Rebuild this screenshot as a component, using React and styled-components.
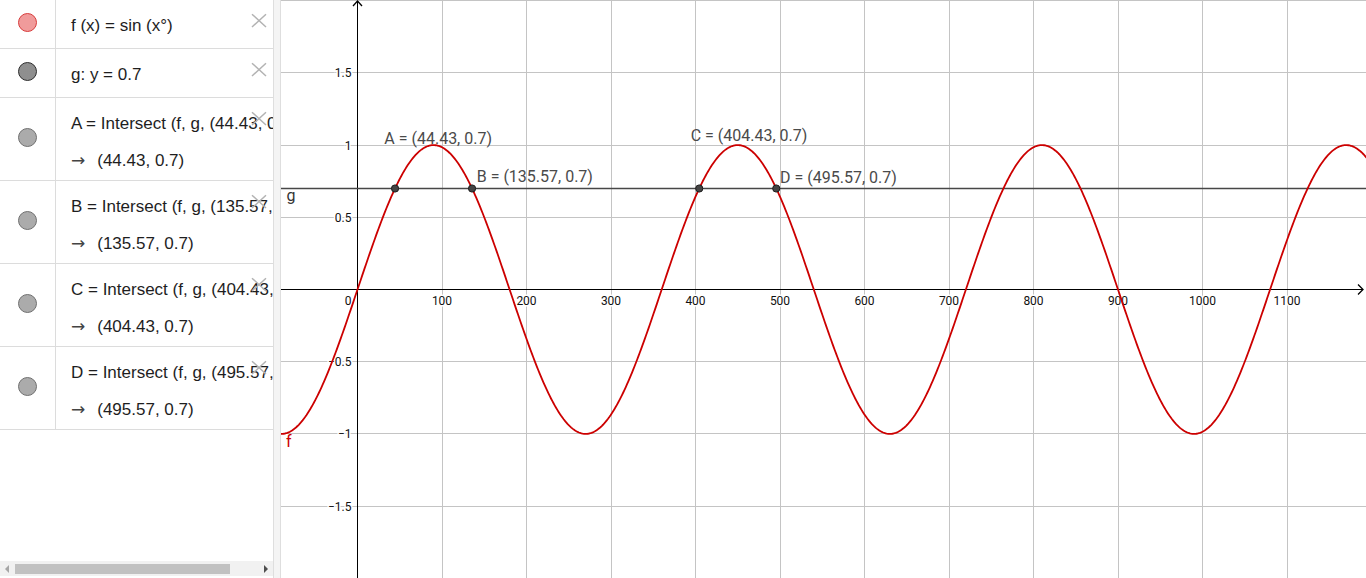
import React from "react"
import styled, { createGlobalStyle } from "styled-components"

// graph geometry (svg coords, the graph view starts at page x = 281)
const W = 1085
const H = 578
const OX = 76.5
const OY = 289.5
const SX = 0.845
const SY = 144.4

const px = x => OX + x * SX
const py = y => OY - y * SY
const snap = v => Math.round(v - 0.5) + 0.5

const rows = [
  { id: "f", dot: "red", text: "f (x) = sin (x°)" },
  { id: "g", dot: "dark", text: "g: y = 0.7" },
  { id: "A", dot: "plain", text: "A = Intersect (f, g, (44.43, 0.7))", value: "(44.43, 0.7)" },
  { id: "B", dot: "plain", text: "B = Intersect (f, g, (135.57, 0.7))", value: "(135.57, 0.7)" },
  { id: "C", dot: "plain", text: "C = Intersect (f, g, (404.43, 0.7))", value: "(404.43, 0.7)" },
  { id: "D", dot: "plain", text: "D = Intersect (f, g, (495.57, 0.7))", value: "(495.57, 0.7)" },
]

const points = [
  { name: "A", x: 44.43, lx: 103.3, ly: 144 },
  { name: "B", x: 135.57, lx: 195.7, ly: 181.7 },
  { name: "C", x: 404.43, lx: 409.7, ly: 141 },
  { name: "D", x: 495.57, lx: 499, ly: 183.3 },
]

const dotColors = {
  red: { fill: "#f09b9b", ring: "#d83c3c" },
  dark: { fill: "#999", ring: "#2e2e2e" },
  plain: { fill: "#ababab", ring: "#707070" },
}

const GlobalStyle = createGlobalStyle`
  html, body {
    margin: 0;
    padding: 0;
    background: #fff;
  }
  body {
    overflow: hidden;
    font-family: "Liberation Sans", Arial, sans-serif;
  }
`

const Layout = styled.div`
  display: flex;
  width: 1366px;
  height: 578px;
`

/* algebra view */
const AlgebraPanel = styled.aside`
  width: 273px;
  flex: none;
  display: flex;
  flex-direction: column;
  background: #fff;
`

const Rows = styled.div`
  flex: 1;
`

const Row = styled.div`
  position: relative;
  display: flex;
  min-height: 48px;
  border-bottom: 1px solid #dcdcdc;
`

const Marker = styled.div`
  width: 56px;
  flex: none;
  box-sizing: border-box;
  padding-bottom: 4px;
  border-right: 1px solid #dcdcdc;
  display: flex;
  align-items: center;
  justify-content: center;
`

const Dot = styled.span`
  width: 19px;
  height: 19px;
  box-sizing: border-box;
  border-radius: 50%;
  background-color: ${p => p.$fill};
  border: 1px solid ${p => p.$ring};
  ${p =>
    p.$textured &&
    `background-image: radial-gradient(circle, #777 0.5px, transparent 0.8px);
     background-size: 2px 2px;`}
`

const Expr = styled.div`
  flex: 1;
  min-width: 0;
  overflow: hidden;
  padding: 16px 0 10px 15px;
  display: flex;
  flex-direction: column;
  gap: 16px;
  font-size: 17px;
  line-height: 20px;
  color: #1e1e1e;
  white-space: nowrap;
`

const TextLine = styled.div`
  height: 20px;
  display: flex;
  align-items: baseline;
`

const ResultArrow = styled.span`
  font-family: "DejaVu Sans", sans-serif;
  font-size: 17px;
  color: #444;
  margin-right: 12px;
`

const CloseButton = styled.span`
  position: absolute;
  top: 13px;
  right: 6px;
  display: flex;
`

const HScroll = styled.div`
  height: 15px;
  margin-bottom: 2px;
  background: #f1f1f1;
  display: flex;
  align-items: center;
  padding: 0 5px;
`

const ScrollArrow = styled.span`
  width: 0;
  height: 0;
  border-top: 4px solid transparent;
  border-bottom: 4px solid transparent;
  ${p =>
    p.$dir === "left"
      ? `border-right: 4px solid #a6a6a6;`
      : `border-left: 4px solid #4e4e4e; margin-left: auto;`}
`

const ScrollThumb = styled.span`
  width: 215px;
  height: 10px;
  margin-left: 6px;
  background: #c1c1c1;
`

const Splitter = styled.div`
  width: 6px;
  flex: none;
  background: #f4f4f4;
  border-left: 1px solid #dedede;
  border-right: 1px solid #dedede;
`

/* graphics view */
const GraphView = styled.main`
  flex: 1;
  overflow: hidden;
  background: #fff;
  svg {
    display: block;
  }
`

const TickText = styled.text`
  font-family: Roboto, "Liberation Sans", sans-serif;
  font-size: 12px;
  fill: #111;
  stroke: #fff;
  stroke-width: 3px;
  paint-order: stroke;
`

const LabelText = styled.text`
  font-family: Roboto, "Liberation Sans", sans-serif;
  font-size: 16px;
  fill: ${p => p.$color || "#4a4a4a"};
`

const CloseIcon = () => (
  <svg width="16" height="15" viewBox="0 0 16 15">
    <path d="M1 1.2 L15 14 M15 1.2 L1 14" stroke="#b3b3b3" strokeWidth="1.5" fill="none" />
  </svg>
)

const AlgebraRow = ({ row }) => {
  const c = dotColors[row.dot]
  return (
    <Row>
      <Marker>
        <Dot $fill={c.fill} $ring={c.ring} $textured={row.dot === "dark"} />
      </Marker>
      <Expr>
        <TextLine>{row.text}</TextLine>
        {row.value && (
          <TextLine>
            <ResultArrow>→</ResultArrow>
            {row.value}
          </TextLine>
        )}
      </Expr>
      <CloseButton>
        <CloseIcon />
      </CloseButton>
    </Row>
  )
}

const sinePath = () => {
  let d = ""
  for (let x = -92; x <= 1196; x += 1.5) {
    const X = px(x).toFixed(2)
    const Y = py(Math.sin((x * Math.PI) / 180)).toFixed(2)
    d += (d ? " L" : "M") + X + " " + Y
  }
  return d
}

const fmt = v => (v < 0 ? "\u2212" + Math.abs(v) : String(v))

const Graph = () => {
  const xTicks = Array.from({ length: 11 }, (_, i) => (i + 1) * 100)
  const yTicks = [2, 1.5, 1, 0.5, -0.5, -1, -1.5]
  const gy = snap(py(0.7))

  return (
    <svg width={W} height={H} viewBox={`0 0 ${W} ${H}`}>
      {/* grid */}
      <g stroke="#c4c4c4" strokeWidth="1">
        {xTicks.map(t => (
          <line key={t} x1={snap(px(t))} y1="0" x2={snap(px(t))} y2={H} />
        ))}
        {yTicks.map(t => (
          <line key={t} x1="0" y1={snap(py(t))} x2={W} y2={snap(py(t))} />
        ))}
      </g>

      {/* axes */}
      <g stroke="#000" strokeWidth="1" fill="none">
        <line x1={OX} y1="1" x2={OX} y2={H} />
        <line x1="0" y1={OY} x2={W - 3} y2={OY} />
        <path d={`M${OX - 4.5} 6 L${OX} 1 L${OX + 4.5} 6`} strokeWidth="1.3" />
        <path d={`M${W - 8} ${OY - 5} L${W - 3} ${OY} L${W - 8} ${OY + 5}`} strokeWidth="1.3" />
      </g>

      {/* tick labels */}
      {yTicks
        .filter(t => t !== 2)
        .map(t => (
          <TickText key={t} x={OX - 6} y={snap(py(t)) + 4} textAnchor="end">
            {fmt(t)}
          </TickText>
        ))}
      <TickText x={OX - 6} y="305" textAnchor="end">
        0
      </TickText>
      {xTicks.map(t => (
        <TickText key={t} x={px(t)} y="305" textAnchor="middle">
          {t}
        </TickText>
      ))}

      {/* g: y = 0.7 */}
      <line x1="0" y1={gy} x2={W} y2={gy} stroke="#474747" strokeWidth="1.6" />
      <LabelText x="5.5" y="201" $color="#333">
        g
      </LabelText>

      {/* f(x) = sin(x°) */}
      <path d={sinePath()} stroke="#cc0000" strokeWidth="1.8" fill="none" />
      <LabelText x="5" y="446.5" $color="#cc0000">
        f
      </LabelText>

      {/* intersection points */}
      {points.map(p => (
        <g key={p.name}>
          <circle cx={px(p.x)} cy={gy} r="3.6" fill="#444" stroke="#1c1c1c" strokeWidth="1" />
          <LabelText x={p.lx} y={p.ly}>
            {`${p.name} = (${p.x}, 0.7)`}
          </LabelText>
        </g>
      ))}
    </svg>
  )
}

const App = () => (
  <>
    <GlobalStyle />
    <Layout>
      <AlgebraPanel>
        <Rows>
          {rows.map(r => (
            <AlgebraRow key={r.id} row={r} />
          ))}
        </Rows>
        <HScroll>
          <ScrollArrow $dir="left" />
          <ScrollThumb />
          <ScrollArrow $dir="right" />
        </HScroll>
      </AlgebraPanel>
      <Splitter />
      <GraphView>
        <Graph />
      </GraphView>
    </Layout>
  </>
)

export default App
